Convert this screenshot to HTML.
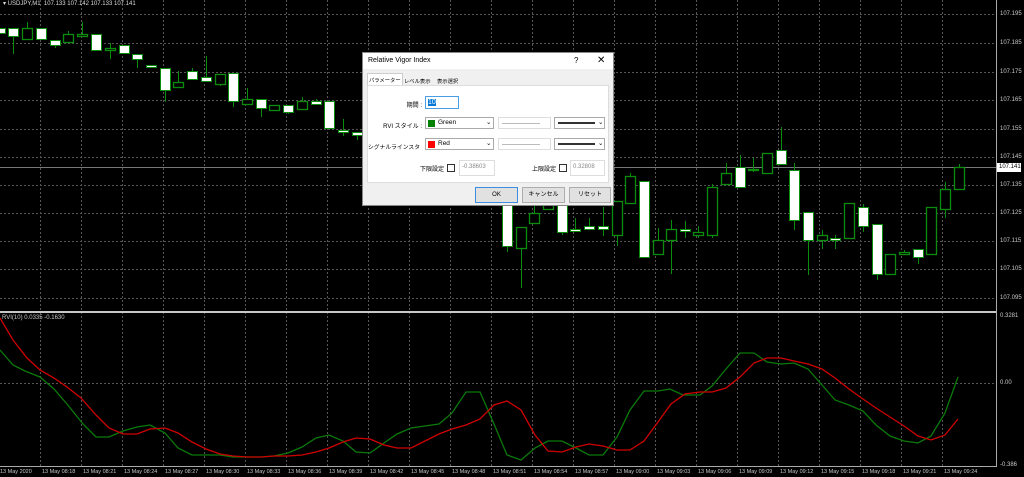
<!DOCTYPE html>
<html><head><meta charset="utf-8"><style>
html,body{margin:0;padding:0;background:#000;width:1024px;height:477px;overflow:hidden;font-family:"Liberation Sans","Noto Sans CJK JP",sans-serif}
.ax{position:absolute;color:#c8c8c8;font-size:7px;line-height:8px}
#dlg{position:absolute;left:362px;top:52px;width:252px;height:154px;background:#f0f0f0;border:1px solid #888;box-sizing:border-box;font-size:6.5px;color:#000}
.t{position:absolute;white-space:nowrap}
.r{position:absolute;white-space:nowrap;text-align:right}
.cb{position:absolute;height:12px;background:#fff;border:1px solid #aaa;box-sizing:border-box}
.btn{position:absolute;top:134px;height:16px;background:#e1e1e1;border:1px solid #adadad;box-sizing:border-box;text-align:center;line-height:14px;font-size:6px}
.chk{position:absolute;width:8px;height:8px;border:1px solid #333;background:#fff;box-sizing:border-box}
</style></head><body>
<svg width="1024" height="477" style="position:absolute;left:0;top:0">
<g stroke="#555" stroke-width="1" stroke-dasharray="2,2">
<line x1="0" y1="14.5" x2="996" y2="14.5"/><line x1="0" y1="43.5" x2="996" y2="43.5"/><line x1="0" y1="72.5" x2="996" y2="72.5"/><line x1="0" y1="100.5" x2="996" y2="100.5"/><line x1="0" y1="129.5" x2="996" y2="129.5"/><line x1="0" y1="157.5" x2="996" y2="157.5"/><line x1="0" y1="185.5" x2="996" y2="185.5"/><line x1="0" y1="213.5" x2="996" y2="213.5"/><line x1="0" y1="241.5" x2="996" y2="241.5"/><line x1="0" y1="269.5" x2="996" y2="269.5"/><line x1="0" y1="298.5" x2="996" y2="298.5"/>
<line x1="0" y1="383.5" x2="996" y2="383.5"/>
<line x1="40.5" y1="0" x2="40.5" y2="466"/><line x1="81.5" y1="0" x2="81.5" y2="466"/><line x1="122.5" y1="0" x2="122.5" y2="466"/><line x1="163.5" y1="0" x2="163.5" y2="466"/><line x1="204.5" y1="0" x2="204.5" y2="466"/><line x1="245.5" y1="0" x2="245.5" y2="466"/><line x1="286.5" y1="0" x2="286.5" y2="466"/><line x1="327.5" y1="0" x2="327.5" y2="466"/><line x1="368.5" y1="0" x2="368.5" y2="466"/><line x1="409.5" y1="0" x2="409.5" y2="466"/><line x1="450.5" y1="0" x2="450.5" y2="466"/><line x1="491.5" y1="0" x2="491.5" y2="466"/><line x1="532.5" y1="0" x2="532.5" y2="466"/><line x1="573.5" y1="0" x2="573.5" y2="466"/><line x1="614.5" y1="0" x2="614.5" y2="466"/><line x1="655.5" y1="0" x2="655.5" y2="466"/><line x1="696.5" y1="0" x2="696.5" y2="466"/><line x1="737.5" y1="0" x2="737.5" y2="466"/><line x1="778.5" y1="0" x2="778.5" y2="466"/><line x1="819.5" y1="0" x2="819.5" y2="466"/><line x1="860.5" y1="0" x2="860.5" y2="466"/><line x1="901.5" y1="0" x2="901.5" y2="466"/><line x1="942.5" y1="0" x2="942.5" y2="466"/>
</g>
<line x1="0" y1="167.5" x2="996" y2="167.5" stroke="#777" stroke-width="1"/>
<g stroke="#0c8c0c" stroke-width="1">
<line x1="13.5" y1="28" x2="13.5" y2="54"/><line x1="27.5" y1="22" x2="27.5" y2="40"/><line x1="41.5" y1="28" x2="41.5" y2="40"/><line x1="55.5" y1="40" x2="55.5" y2="48"/><line x1="68.5" y1="31" x2="68.5" y2="43"/><line x1="82.5" y1="22" x2="82.5" y2="37"/><line x1="110.5" y1="43" x2="110.5" y2="59"/><line x1="137.5" y1="54" x2="137.5" y2="68"/><line x1="165.5" y1="68" x2="165.5" y2="102"/><line x1="178.5" y1="71" x2="178.5" y2="87"/><line x1="192.5" y1="68" x2="192.5" y2="79"/><line x1="206.5" y1="56" x2="206.5" y2="81"/><line x1="220.5" y1="74" x2="220.5" y2="86"/><line x1="233.5" y1="73" x2="233.5" y2="107"/><line x1="247.5" y1="88" x2="247.5" y2="104"/><line x1="261.5" y1="99" x2="261.5" y2="117"/><line x1="288.5" y1="105" x2="288.5" y2="114"/><line x1="302.5" y1="97" x2="302.5" y2="109"/><line x1="316.5" y1="99" x2="316.5" y2="104"/><line x1="343.5" y1="119" x2="343.5" y2="136"/><line x1="357.5" y1="132" x2="357.5" y2="140"/>
<line x1="507.5" y1="200" x2="507.5" y2="252"/><line x1="521.5" y1="227" x2="521.5" y2="288"/><line x1="534.5" y1="200" x2="534.5" y2="223"/><line x1="562.5" y1="200" x2="562.5" y2="235"/><line x1="575.5" y1="218" x2="575.5" y2="231"/><line x1="589.5" y1="218" x2="589.5" y2="229"/><line x1="603.5" y1="207" x2="603.5" y2="236"/><line x1="617.5" y1="201" x2="617.5" y2="246"/><line x1="630.5" y1="173" x2="630.5" y2="203"/><line x1="658.5" y1="228" x2="658.5" y2="254"/><line x1="671.5" y1="220" x2="671.5" y2="274"/><line x1="685.5" y1="221" x2="685.5" y2="238"/><line x1="698.5" y1="226" x2="698.5" y2="238"/><line x1="712.5" y1="184" x2="712.5" y2="238"/><line x1="726.5" y1="163" x2="726.5" y2="184"/><line x1="740.5" y1="155" x2="740.5" y2="187"/><line x1="753.5" y1="158" x2="753.5" y2="172"/><line x1="781.5" y1="127" x2="781.5" y2="164"/><line x1="794.5" y1="163" x2="794.5" y2="230"/><line x1="808.5" y1="212" x2="808.5" y2="275"/><line x1="822.5" y1="230" x2="822.5" y2="249"/><line x1="835.5" y1="235" x2="835.5" y2="249"/><line x1="863.5" y1="204" x2="863.5" y2="232"/><line x1="877.5" y1="224" x2="877.5" y2="280"/><line x1="904.5" y1="250" x2="904.5" y2="254"/><line x1="918.5" y1="249" x2="918.5" y2="264"/><line x1="945.5" y1="182" x2="945.5" y2="218"/><line x1="959.5" y1="164" x2="959.5" y2="189"/>
</g>
<g fill="#fff" stroke="#0c8c0c" stroke-width="1">
<rect x="-4.5" y="28.5" width="10" height="5"/><rect x="8.5" y="28.5" width="10" height="8"/><rect x="36.5" y="28.5" width="10" height="11"/><rect x="50.5" y="40.5" width="10" height="5"/><rect x="91.5" y="34.5" width="10" height="16"/><rect x="119.5" y="45.5" width="10" height="8"/><rect x="132.5" y="54.5" width="10" height="5"/><rect x="146.5" y="65.5" width="10" height="2"/><rect x="160.5" y="68.5" width="10" height="22"/><rect x="187.5" y="71.5" width="10" height="8"/><rect x="201.5" y="77.5" width="10" height="4"/><rect x="228.5" y="73.5" width="10" height="28"/><rect x="256.5" y="99.5" width="10" height="9"/><rect x="283.5" y="105.5" width="10" height="7"/><rect x="311.5" y="101.5" width="10" height="3"/><rect x="324.5" y="101.5" width="10" height="27"/><rect x="338.5" y="130.5" width="10" height="2"/><rect x="352.5" y="132.5" width="10" height="3"/>
<rect x="502.5" y="200.5" width="10" height="46"/><rect x="557.5" y="200.5" width="10" height="32"/><rect x="570.5" y="229.5" width="10" height="2"/><rect x="584.5" y="226.5" width="10" height="3"/><rect x="598.5" y="226.5" width="10" height="3"/><rect x="639.5" y="181.5" width="10" height="76"/><rect x="680.5" y="229.5" width="10" height="2"/><rect x="735.5" y="167.5" width="10" height="20"/><rect x="776.5" y="150.5" width="10" height="14"/><rect x="789.5" y="170.5" width="10" height="50"/><rect x="803.5" y="212.5" width="10" height="28"/><rect x="830.5" y="238.5" width="10" height="2"/><rect x="858.5" y="207.5" width="10" height="19"/><rect x="872.5" y="224.5" width="10" height="50"/><rect x="913.5" y="249.5" width="10" height="8"/>
</g>
<g fill="#000" stroke="#0c8c0c" stroke-width="1.3">
<rect x="22.5" y="28.5" width="10" height="11"/><rect x="63.5" y="34.5" width="10" height="8"/><rect x="77.5" y="34.5" width="10" height="2"/><rect x="105.5" y="48.5" width="10" height="2"/><rect x="173.5" y="82.5" width="10" height="5"/><rect x="215.5" y="74.5" width="10" height="10"/><rect x="242.5" y="99.5" width="10" height="5"/><rect x="269.5" y="105.5" width="10" height="5"/><rect x="297.5" y="101.5" width="10" height="8"/>
<rect x="516.5" y="227.5" width="10" height="21"/><rect x="529.5" y="213.5" width="10" height="10"/><rect x="543.5" y="195.5" width="10" height="14"/><rect x="612.5" y="201.5" width="10" height="34"/><rect x="625.5" y="176.5" width="10" height="27"/><rect x="653.5" y="240.5" width="10" height="14"/><rect x="666.5" y="229.5" width="10" height="11"/><rect x="693.5" y="232.5" width="10" height="3"/><rect x="707.5" y="187.5" width="10" height="48"/><rect x="721.5" y="173.5" width="10" height="11"/><rect x="748.5" y="169.5" width="10" height="1"/><rect x="762.5" y="153.5" width="10" height="20"/><rect x="817.5" y="235.5" width="10" height="5"/><rect x="844.5" y="203.5" width="10" height="35"/><rect x="885.5" y="254.5" width="10" height="20"/><rect x="899.5" y="252.5" width="10" height="2"/><rect x="926.5" y="207.5" width="10" height="47"/><rect x="940.5" y="189.5" width="10" height="20"/><rect x="954.5" y="167.5" width="10" height="22"/>
</g>
<line x1="0" y1="312" x2="996" y2="312" stroke="#c8c8c8" stroke-width="2"/>
<line x1="0" y1="466.5" x2="996" y2="466.5" stroke="#aaa" stroke-width="1"/>
<line x1="996.5" y1="0" x2="996.5" y2="467" stroke="#aaa" stroke-width="1"/>
<polyline fill="none" stroke="#0a7a0a" stroke-width="1.3" points="0,350 13,365 25,371 40,377 54,389 67,404 83,424 96,437 109,437 123,431 137,427 150,425 165,433 178,448 192,455 206,455 220,455 233,457 247,457 261,457 274,456 288,453 302,447 316,438 329,435 343,441 356,452 370,453 384,443 397,434 411,428 425,426 439,424 452,413 466,392 480,392 494,424 507,455 521,460 535,448 548,441 562,441 576,448 589,455 603,455 617,437 630,410 644,391 658,391 670,389 683,395 700,395 712,386 726,369 740,353 754,353 767,362 781,364 794,363 808,369 822,385 835,400 849,405 863,411 876,425 890,436 904,441 918,443 931,436 945,413 958,377"/>
<polyline fill="none" stroke="#d00000" stroke-width="1.3" points="0,318 13,340 27,358 40,370 54,378 67,387 81,398 96,415 109,428 123,434 137,434 150,429 165,428 178,433 192,442 206,449 220,454 233,456 247,457 261,457 274,456 288,456 302,455 316,452 329,448 343,442 356,438 370,439 384,445 397,448 411,448 425,441 439,434 452,429 466,425 480,419 494,405 507,401 521,410 535,435 548,451 562,452 576,447 589,444 603,446 617,450 630,450 644,441 658,422 671,404 685,394 700,392 712,392 726,388 740,377 754,363 767,358 781,358 794,361 808,364 822,369 835,378 849,389 863,399 876,408 890,417 904,426 918,436 931,440 945,435 958,419"/>
<rect x="997" y="163" width="24" height="9" fill="#fff"/>
</svg>
<div class="ax" style="left:3px;top:0;color:#ddd;font-size:6px">&#9662; USDJPY,M1 &nbsp;107.133 107.142 107.133 107.141</div>
<div class="ax" style="left:2px;top:314px;font-size:6px">RVI(10) 0.0335 -0.1630</div>
<div class="ax" style="left:1000px;top:10px;font-size:6px">107.195</div>
<div class="ax" style="left:1000px;top:39px;font-size:6px">107.185</div>
<div class="ax" style="left:1000px;top:68px;font-size:6px">107.175</div>
<div class="ax" style="left:1000px;top:96px;font-size:6px">107.165</div>
<div class="ax" style="left:1000px;top:125px;font-size:6px">107.155</div>
<div class="ax" style="left:1000px;top:153px;font-size:6px">107.145</div>
<div class="ax" style="left:999px;top:163px;color:#000;font-size:6px">107.141</div>
<div class="ax" style="left:1000px;top:181px;font-size:6px">107.135</div>
<div class="ax" style="left:1000px;top:209px;font-size:6px">107.125</div>
<div class="ax" style="left:1000px;top:237px;font-size:6px">107.115</div>
<div class="ax" style="left:1000px;top:265px;font-size:6px">107.105</div>
<div class="ax" style="left:1000px;top:294px;font-size:6px">107.095</div>
<div class="ax" style="left:1000px;top:312px;font-size:6px">0.3281</div>
<div class="ax" style="left:1000px;top:379px;font-size:6px">0.00</div>
<div class="ax" style="left:1000px;top:461px;font-size:6px">-0.386</div>
<div class="ax" style="left:0;top:468px;width:1000px;height:9px;font-size:5.5px">
<span class="t" style="left:0">13 May 2020</span><span class="t" style="left:42px">13 May 08:18</span><span class="t" style="left:83px">13 May 08:21</span><span class="t" style="left:124px">13 May 08:24</span><span class="t" style="left:165px">13 May 08:27</span><span class="t" style="left:206px">13 May 08:30</span><span class="t" style="left:247px">13 May 08:33</span><span class="t" style="left:288px">13 May 08:36</span><span class="t" style="left:329px">13 May 08:39</span><span class="t" style="left:370px">13 May 08:42</span><span class="t" style="left:411px">13 May 08:45</span><span class="t" style="left:452px">13 May 08:48</span><span class="t" style="left:493px">13 May 08:51</span><span class="t" style="left:534px">13 May 08:54</span><span class="t" style="left:575px">13 May 08:57</span><span class="t" style="left:616px">13 May 09:00</span><span class="t" style="left:657px">13 May 09:03</span><span class="t" style="left:698px">13 May 09:06</span><span class="t" style="left:739px">13 May 09:09</span><span class="t" style="left:780px">13 May 09:12</span><span class="t" style="left:821px">13 May 09:15</span><span class="t" style="left:862px">13 May 09:18</span><span class="t" style="left:903px">13 May 09:21</span><span class="t" style="left:944px">13 May 09:24</span>
</div>
<div id="dlg">
<div style="position:absolute;left:0;top:0;width:250px;height:16px;background:#fff"></div>
<span class="t" style="left:5px;top:4px;font-size:7px">Relative Vigor Index</span>
<span class="t" style="left:211px;top:3px;font-size:8px">?</span>
<span class="t" style="left:234px;top:2px;font-size:10px">✕</span>
<div style="position:absolute;left:4px;top:20px;width:34px;height:13px;background:#fff;border:1px solid #ccc;border-bottom:none"></div>
<span class="t" style="left:6px;top:23px;font-size:5.3px">パラメーター</span>
<span class="t" style="left:41px;top:24px;font-size:5.3px">レベル表示</span>
<span class="t" style="left:74px;top:24px;font-size:5.3px">表示選択</span>
<div style="position:absolute;left:4px;top:32px;width:242px;height:98px;background:#fff;border:1px solid #ddd;box-sizing:border-box"></div>
<span class="r" style="right:191px;top:47px;font-size:6px">期間 :</span>
<div class="cb" style="left:62px;top:43px;width:34px;height:13px;border-color:#4a9ee6"><span style="position:absolute;left:2px;top:2px;background:#0078d7;color:#fff;font-size:7px;line-height:7px">10</span></div>
<span class="r" style="right:191px;top:68px;font-size:6px">RVI スタイル :</span>
<div class="cb" style="left:62px;top:64px;width:69px"><span style="position:absolute;left:2px;top:2px;width:7px;height:7px;background:#008000"></span><span class="t" style="left:12px;top:1px">Green</span><span class="t" style="left:60px;top:0">⌄</span></div>
<div class="cb" style="left:135px;top:64px;width:53px;border-color:#ddd"><span style="position:absolute;left:3px;top:5px;width:38px;height:1px;background:#bbb"></span></div>
<div class="cb" style="left:191px;top:64px;width:51px"><span style="position:absolute;left:3px;top:4px;width:37px;height:2px;background:#333"></span><span class="t" style="left:43px;top:0">⌄</span></div>
<span class="r" style="right:193px;top:89px;font-size:5.8px">シグナルラインスタ</span>
<div class="cb" style="left:62px;top:85px;width:69px"><span style="position:absolute;left:2px;top:2px;width:7px;height:7px;background:#f00"></span><span class="t" style="left:12px;top:1px">Red</span><span class="t" style="left:60px;top:0">⌄</span></div>
<div class="cb" style="left:135px;top:85px;width:53px;border-color:#ddd"><span style="position:absolute;left:3px;top:5px;width:38px;height:1px;background:#bbb"></span></div>
<div class="cb" style="left:191px;top:85px;width:51px"><span style="position:absolute;left:3px;top:4px;width:37px;height:2px;background:#333"></span><span class="t" style="left:43px;top:0">⌄</span></div>
<span class="r" style="right:169px;top:111px;font-size:6px">下限設定</span>
<div class="chk" style="left:84px;top:111px"></div>
<div class="cb" style="left:96px;top:107px;width:36px;height:16px;border-color:#ddd"><span class="t" style="left:2px;top:3px;color:#888;font-size:6px">-0.38603</span></div>
<span class="r" style="right:57px;top:111px;font-size:6px">上限設定</span>
<div class="chk" style="left:196px;top:111px"></div>
<div class="cb" style="left:207px;top:107px;width:35px;height:16px;border-color:#ddd"><span class="t" style="left:2px;top:3px;color:#888;font-size:6px">0.32808</span></div>
<div class="btn" style="left:112px;width:43px;border-color:#3c8ce0">OK</div>
<div class="btn" style="left:159px;width:43px">キャンセル</div>
<div class="btn" style="left:206px;width:42px">リセット</div>
</div>
</body></html>
